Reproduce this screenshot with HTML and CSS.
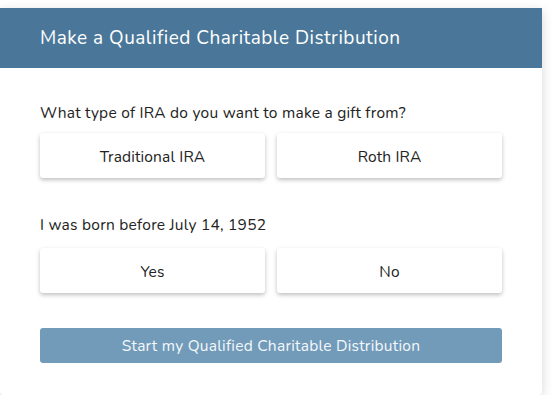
FILE: index.html
```html
<!DOCTYPE html>
<html>
<head>
<meta charset="utf-8">
<link rel="stylesheet" href="styles.css">
</head>
<body>
<div class="card">
  <div class="card-header">Make a Qualified Charitable Distribution</div>
  <div class="card-body">
    <div class="question">What type of IRA do you want to make a gift from?</div>
    <div class="options">
      <button class="option">Traditional IRA</button>
      <button class="option">Roth IRA</button>
    </div>
    <div class="question q2">I was born before July 14, 1952</div>
    <div class="options">
      <button class="option">Yes</button>
      <button class="option">No</button>
    </div>
    <button class="start">Start my Qualified Charitable Distribution</button>
  </div>
</div>
</body>
</html>
```
FILE: styles.css
```css
html, body {
  margin: 0;
  padding: 0;
  background: #ffffff;
}
body {
  font-family: "Nunito", "Lato", "Open Sans", sans-serif;
  color: #222222;
}
.card {
  width: 542px;
  margin-top: 8px;
  background: #ffffff;
  border-radius: 0 0 4px 4px;
  box-shadow: 0 3px 12px rgba(0, 0, 0, 0.16);
}
.card-header {
  height: 60px;
  background: #4a7799;
  color: #ffffff;
  font-size: 19px;
  letter-spacing: 0.5px;
  padding-left: 40px;
  display: flex;
  align-items: center;
}
.card-body {
  padding: 35px 40px 32px 40px;
  display: flex;
  flex-direction: column;
}
.question {
  font-size: 15.5px;
  letter-spacing: 0.25px;
  line-height: 20px;
  margin-bottom: 10px;
}
.q2 {
  margin-top: 37px;
  margin-bottom: 13px;
}
.options {
  display: grid;
  grid-template-columns: 1fr 1fr;
  gap: 12px;
}
.option {
  height: 45px;
  border: none;
  background: #ffffff;
  border-radius: 3px;
  box-shadow: 0 2px 4px rgba(0, 0, 0, 0.25);
  font-family: inherit;
  font-size: 15.5px;
  letter-spacing: 0.15px;
  color: #222222;
  padding: 2px 0 0 0;
}
.start {
  margin-top: 35px;
  height: 35px;
  border: none;
  border-radius: 3px;
  background: #729bb9;
  color: #f4f8fb;
  font-family: inherit;
  font-size: 15.5px;
  letter-spacing: 0.25px;
  padding: 0;
}
```
